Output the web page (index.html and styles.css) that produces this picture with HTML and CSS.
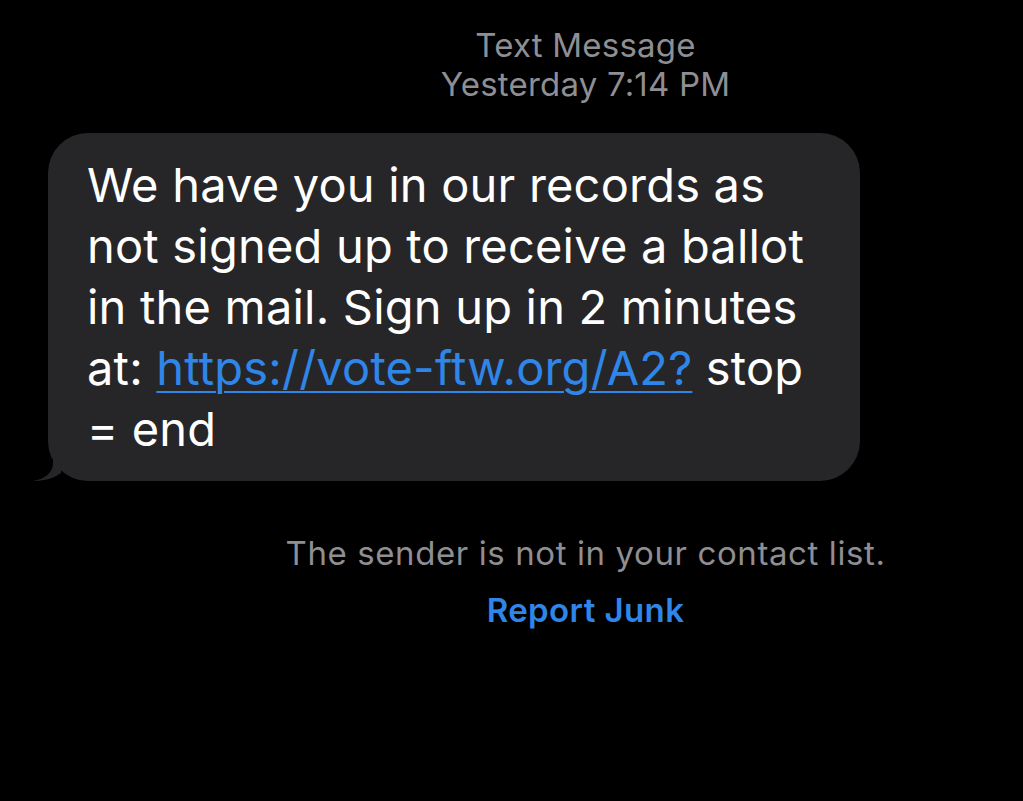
FILE: index.html
```html
<!DOCTYPE html>
<html lang="en">
<head>
    <meta charset="UTF-8">
    <title>Text Message</title>
    <link rel="stylesheet" href="styles.css">
</head>
<body>
    <div class="header">
        <div>Text Message</div>
        <div>Yesterday 7:14 PM</div>
    </div>

    <div class="thread">
        <div class="bubble">
            We have you in our records as<br>
            not signed up to receive a ballot<br>
            in the mail. Sign up in 2 minutes<br>
            at: <a href="#">https://vote-ftw.org/A2?</a> stop<br>
            = end
            <svg class="tail" width="30" height="34" viewBox="0 0 30 34">
                <path d="M20 0 L20 16 C20 26 12 32 0 34 C10 34 20 32 28 26 L30 0 Z" fill="#262629"/>
            </svg>
        </div>
    </div>

    <div class="notice">
        <div class="notice-text">The sender is not in your contact list.</div>
        <a class="report" href="#">Report Junk</a>
    </div>
</body>
</html>
```

FILE: styles.css
```css
body {
    margin: 0;
    background: #000;
    font-family: Inter, "Noto Sans", sans-serif;
    width: 1023px;
    height: 801px;
    overflow: hidden;
}
.header {
    padding: 26px 0 0 148px;
    text-align: center;
    color: #8e8e93;
    font-size: 33px;
    line-height: 39px;
    letter-spacing: 0.2px;
}
.thread {
    padding: 29px 0 0 48px;
}
.bubble {
    position: relative;
    width: 812px;
    box-sizing: border-box;
    padding: 21px 20px 22px 39px;
    background: #262629;
    border-radius: 40px;
    color: #fff;
    font-size: 47px;
    line-height: 61px;
    letter-spacing: 0.2px;
}
.bubble a {
    color: #2f86e8;
    text-decoration: underline;
    text-decoration-thickness: 2px;
    text-underline-offset: 6px;
}
.tail {
    position: absolute;
    left: -15px;
    bottom: 0;
}
.notice {
    padding: 52px 0 0 148px;
    text-align: center;
    font-size: 33px;
}
.notice-text {
    color: #8e8e93;
    letter-spacing: 0.6px;
}
.report {
    display: inline-block;
    margin-top: 17px;
    color: #2f86e8;
    font-weight: 600;
    letter-spacing: 0.4px;
    text-decoration: none;
}
```
